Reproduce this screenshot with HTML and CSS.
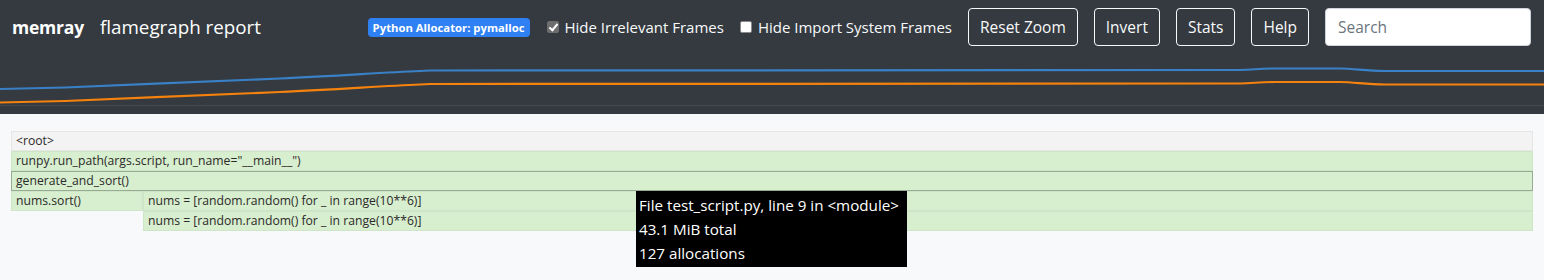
FILE: index.html
```html
<!DOCTYPE html>
<html>
<head>
<meta charset="utf-8">
<link rel="stylesheet" href="styles.css">
</head>
<body>
<header class="top">
  <nav class="navbar">
    <div class="brand"><span class="brand-name">memray</span><span class="brand-sub">flamegraph report</span></div>
    <div class="controls">
      <span class="badge">Python Allocator: pymalloc</span>
      <label class="check"><input type="checkbox" class="cb" checked><span>Hide Irrelevant Frames</span></label>
      <label class="check"><input type="checkbox" class="cb"><span>Hide Import System Frames</span></label>
      <button class="btn">Reset Zoom</button>
      <button class="btn">Invert</button>
      <button class="btn">Stats</button>
      <button class="btn">Help</button>
      <input class="search" type="text" placeholder="Search">
    </div>
  </nav>
  <svg class="chart" width="1544" height="60" viewBox="0 0 1544 60">
    <line x1="0" y1="51.5" x2="1544" y2="51.5" stroke="#454b50" stroke-width="1"/>
    <path d="M0 35 L65 33.5 C140 30.5 200 27.5 280 24.5 C340 22 380 18.5 420 17 L430 16.5 L1240 16 C1255 15.5 1260 14.5 1275 14.5 L1340 14.5 C1355 14.5 1365 17 1385 17 L1544 17" fill="none" stroke="#3a80c6" stroke-width="2.2"/>
    <path d="M0 48.5 L65 47 C140 44 200 41 280 38 C340 35.5 380 32 420 30.5 L430 30 L1240 29.5 C1255 29 1260 28 1275 28 L1340 28 C1355 28 1365 30.5 1385 30.5 L1544 30.5" fill="none" stroke="#f5820d" stroke-width="2.2"/>
  </svg>
</header>
<main class="flame">
  <div class="row"><div class="frame root" style="width:100%">&lt;root&gt;</div></div>
  <div class="row"><div class="frame" style="width:100%">runpy.run_path(args.script, run_name="__main__")</div></div>
  <div class="row"><div class="frame sel" style="width:100%">generate_and_sort()</div></div>
  <div class="row"><div class="frame" style="width:8.67%">nums.sort()</div><div class="frame" style="width:91.33%">nums = [random.random() for _ in range(10**6)]</div></div>
  <div class="row"><div class="gap" style="width:8.67%"></div><div class="frame" style="width:91.33%">nums = [random.random() for _ in range(10**6)]</div></div>
  <div class="tooltip">
    <div>File test_script.py, line 9 in &lt;module&gt;</div>
    <div>43.1 MiB total</div>
    <div>127 allocations</div>
  </div>
</main>
</body>
</html>
```
FILE: styles.css
```css
* { box-sizing: border-box; }
html, body { margin: 0; padding: 0; }
body {
  background: #f8f9fa;
  font-family: "Segoe UI", "Open Sans", "Noto Sans", sans-serif;
  color: #212529;
  width: 1544px;
  height: 280px;
  overflow: hidden;
}
.top { background: #343a40; height: 114px; display: flex; flex-direction: column; }
.navbar {
  display: flex;
  align-items: center;
  height: 54px;
  padding: 0 13px 0 12px;
}
.brand { display: flex; align-items: baseline; color: #fff; }
.brand-name { font-weight: 700; font-size: 17.5px; letter-spacing: -0.2px; margin-right: 16px; }
.brand-sub { font-weight: 400; font-size: 18.8px; }
.controls { margin-left: auto; display: flex; align-items: center; gap: 16px; }
.badge {
  background: #2f80f3;
  color: #fff;
  font-size: 11.3px;
  font-weight: 700;
  padding: 2px 5px;
  border-radius: 4px;
  line-height: 15px;
  margin-right: 1px;
}
.check { display: flex; align-items: center; color: #f8f9fa; font-size: 15px; gap: 6px; }
.cb {
  appearance: none;
  -webkit-appearance: none;
  width: 12px; height: 12px;
  margin: 0;
  background: #fff;
  border: 1px solid #8a8a8a;
  border-radius: 2px;
  position: relative;
}
.cb:checked { background: #6d6d6d; border-color: #6d6d6d; }
.cb:checked::after {
  content: "";
  position: absolute;
  left: 3px; top: 0px;
  width: 3px; height: 7px;
  border: solid #fff;
  border-width: 0 2px 2px 0;
  transform: rotate(40deg);
}
.btn {
  background: transparent;
  color: #f8f9fa;
  border: 1px solid #f8f9fa;
  border-radius: 4px;
  font-family: inherit;
  font-size: 15.5px;
  height: 38px;
  padding: 0 11px;
  line-height: 24px;
}
.search {
  width: 206px;
  height: 38px;
  border: 1px solid #ced4da;
  border-radius: 4px;
  padding: 0 12px;
  font-family: inherit;
  font-size: 15.5px;
  background: #fff;
}
.search::placeholder { color: #6c757d; }
.chart { display: block; }
.flame { position: relative; margin: 17px 11px 0 11px; }
.row { display: flex; height: 20px; }
.frame {
  height: 20px;
  background: #d7eecf;
  border: 1px solid #cfe5c7;
  font-size: 12.2px;
  line-height: 18px;
  padding-left: 4px;
  color: #2d2a2a;
  white-space: nowrap;
  overflow: hidden;
}
.frame.root { background: #f3f3f3; border-color: #e6e6e6; }
.frame.sel { border-color: #98aa92; }
.gap { height: 20px; }
.tooltip {
  position: absolute;
  left: 625px;
  top: 60px;
  width: 271px;
  height: 76px;
  background: #000;
  color: #fff;
  font-size: 15.2px;
  line-height: 24px;
  padding: 2px 3px;
}
```
